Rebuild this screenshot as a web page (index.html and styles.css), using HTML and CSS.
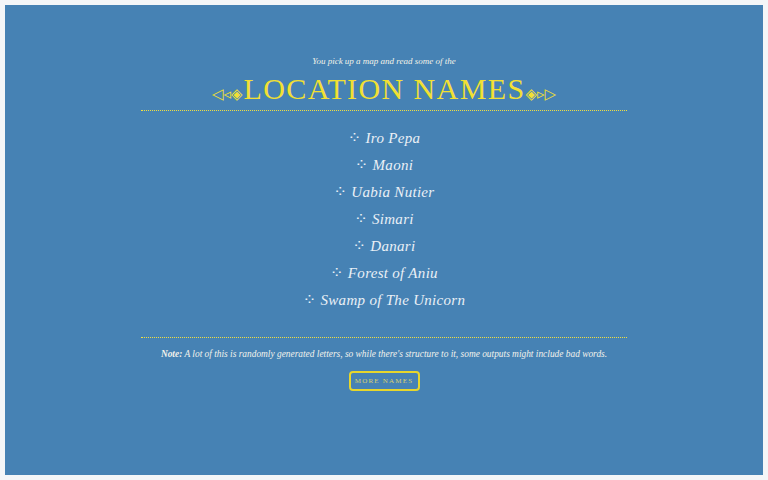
FILE: index.html
```html
<!DOCTYPE html>
<html lang="en">
<head>
<meta charset="utf-8">
<title>Location Names</title>
<link rel="stylesheet" href="styles.css">
</head>
<body>
<main class="panel">
  <section class="sheet">
    <p class="intro">You pick up a map and read some of the</p>
    <h1 class="title"><span class="orn">◁◃◈</span>LOCATION NAMES<span class="orn">◈▹▷</span></h1>
    <ul class="names">
      <li><span class="dot">⁘</span> Iro Pepa</li>
      <li><span class="dot">⁘</span> Maoni</li>
      <li><span class="dot">⁘</span> Uabia Nutier</li>
      <li><span class="dot">⁘</span> Simari</li>
      <li><span class="dot">⁘</span> Danari</li>
      <li><span class="dot">⁘</span> Forest of Aniu</li>
      <li><span class="dot">⁘</span> Swamp of The Unicorn</li>
    </ul>
    <p class="note"><b>Note:</b> A lot of this is randomly generated letters, so while there's structure to it, some outputs might include bad words.</p>
    <div class="actions"><button class="more" type="button">More Names</button></div>
  </section>
</main>
</body>
</html>
```
FILE: styles.css
```css
html, body {
  margin: 0;
  background: #f4f6f8;
}
body {
  padding: 5px;
  font-family: "Liberation Serif", "DejaVu Serif", serif;
}
.panel {
  background: #4682b4;
  height: 470px;
  box-sizing: border-box;
  padding-top: 49px;
  display: flex;
  justify-content: center;
}
.sheet {
  width: 486px;
  display: flex;
  flex-direction: column;
  align-items: stretch;
}
.intro {
  margin: 0;
  text-align: center;
  font-style: italic;
  font-size: 9px;
  color: #f2f2e8;
  line-height: 14px;
}
.title {
  margin: 1px 0 0;
  text-align: center;
  font-weight: normal;
  font-size: 30px;
  letter-spacing: 1.4px;
  color: #f2e033;
  line-height: 40px;
  height: 40px;
  padding-bottom: 1px;
  border-bottom: 1px dotted #f0e040;
}
.orn {
  font-size: 15px;
  letter-spacing: 0;
  vertical-align: 0;
  line-height: 1;
  font-family: "DejaVu Sans", sans-serif;
}
.orn:first-child {
  margin-right: 1px;
}
.names {
  list-style: none;
  margin: 0;
  padding: 14px 0 23px;
  text-align: center;
  border-bottom: 1px dotted #f0e040;
}
.names li {
  font-style: italic;
  font-size: 15px;
  line-height: 27px;
  height: 27px;
  color: #eaf0f6;
  letter-spacing: 0.3px;
}
.dot {
  font-style: normal;
  font-size: 16px;
  line-height: 1;
  font-family: "DejaVu Sans", sans-serif;
}
.note {
  margin: 9px 0 0;
  text-align: center;
  font-style: italic;
  font-size: 9.4px;
  line-height: 14px;
  color: #f2f2ec;
  white-space: nowrap;
}
.actions {
  display: flex;
  justify-content: center;
  margin-top: 10px;
}
.more {
  background: transparent;
  border: 2px solid #e6d62c;
  border-radius: 4px;
  color: #d8d070;
  font-family: "Liberation Serif", serif;
  font-size: 7px;
  text-transform: uppercase;
  letter-spacing: 1.2px;
  padding: 3px 4px;
  height: 20px;
  width: 71px;
}
```
